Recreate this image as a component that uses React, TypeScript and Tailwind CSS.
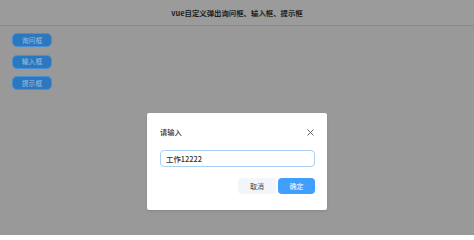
import React, { useState } from 'react';

const fontStack = { fontFamily: '"Noto Sans CJK SC", "Noto Sans", sans-serif' };

const App: React.FC = () => {
  const [value, setValue] = useState('工作12222');
  const buttons = ['询问框', '输入框', '提示框'];

  return (
    <div className="relative w-full h-[235px] bg-[#999999] overflow-hidden" style={fontStack}>
      <div className="h-[26px] flex items-center justify-center border-b border-[#8c8c8c] bg-[#9b9b9b]">
        <span className="text-[7.4px] font-semibold text-[#1e1e1e]">vue自定义弹出询问框、输入框、提示框</span>
      </div>

      <div className="flex flex-col items-start gap-[7.5px] pl-3 pt-[7px]">
        {buttons.map((label) => (
          <button
            key={label}
            className="w-10 h-[14px] rounded-[5px] bg-[#2b78c0] border border-[#4a8fcf] text-[6.8px] leading-none text-[#a2bedb] flex items-center justify-center"
          >
            {label}
          </button>
        ))}
      </div>

      {/* dialog layer */}
      <div className="absolute inset-0 flex justify-center pt-[113px]">
        <div className="w-[180px] h-[97px] bg-white rounded-[2px] shadow-sm pl-[13px] pr-[12px] pt-[12px]">
          <div className="flex items-center justify-between h-[14px]">
            <span className="text-[7.2px] font-medium text-[#303133]">请输入</span>
            <svg width="7" height="7" viewBox="0 0 7 7" className="mr-[1px]">
              <path d="M0.8 0.8 L6.2 6.2 M6.2 0.8 L0.8 6.2" stroke="#555" strokeWidth="0.9" strokeLinecap="round" />
            </svg>
          </div>
          <input
            value={value}
            onChange={(e) => setValue(e.target.value)}
            className="mt-[11px] w-full h-[17px] rounded-[4px] border border-[#a9d0f5] px-[5px] text-[7.4px] font-medium text-[#303133] outline-none"
          />
          <div className="flex justify-end gap-[2px] mt-[11px]">
            <button className="w-[38px] h-[16px] rounded-[4px] bg-[#f2f6fb] text-[7px] text-[#444] flex items-center justify-center">
              取消
            </button>
            <button className="w-[37px] h-[16px] rounded-[4px] bg-[#409eff] text-[7px] text-white flex items-center justify-center">
              确定
            </button>
          </div>
        </div>
      </div>
    </div>
  );
};

export default App;
